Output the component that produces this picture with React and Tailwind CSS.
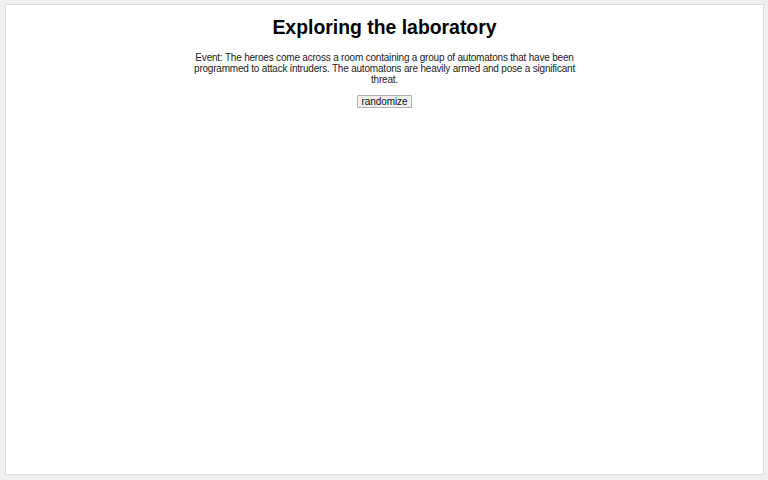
import React, { useState } from 'react';

const events = [
  'The heroes come across a room containing a group of automatons that have been programmed to attack intruders. The automatons are heavily armed and pose a significant threat.',
  'A shattered vat leaks a glowing green fluid across the floor. Something beneath the surface is moving.',
  'Dusty shelves hold rows of labelled jars. One of them rattles as the heroes walk past.',
];

const App = () => {
  const [index, setIndex] = useState(0);

  const randomize = () => {
    setIndex(Math.floor(Math.random() * events.length));
  };

  return (
    <div className="h-[480px] bg-[#f0f0f0] pt-[4px] pl-[5px] pr-[4px] pb-[4px] font-['Liberation_Sans',Arial,sans-serif]">
      <div className="h-[471px] w-[759px] bg-white border border-[#dcdcdc] flex flex-col items-center">
        <h1 className="mt-[10px] text-[19.4px] leading-[24px] font-bold text-black">
          Exploring the laboratory
        </h1>
        <p className="mt-[13px] w-[388px] text-center text-[10px] leading-[11px] tracking-[-0.2px] text-[#222]">
          Event: {events[index]}
        </p>
        <button
          onClick={randomize}
          className="mt-[10px] h-[13px] px-[4px] text-[10px] leading-[11px] tracking-[-0.1px] text-[#111] bg-[#f0f0f0] border border-[#b0b0b0] rounded-[1px]"
        >
          randomize
        </button>
      </div>
    </div>
  );
};

export default App;
